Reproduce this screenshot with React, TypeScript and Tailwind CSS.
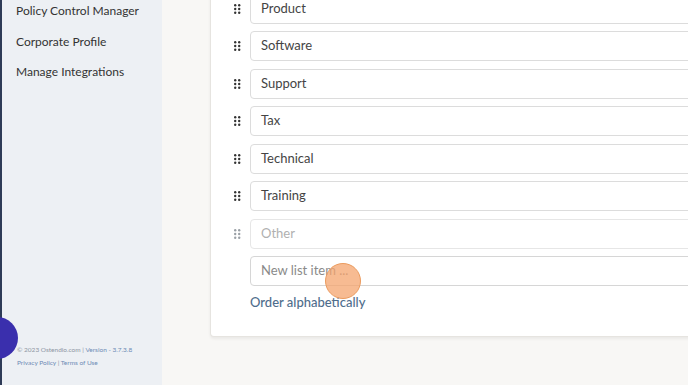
import React from 'react';

const items = ['Product', 'Software', 'Support', 'Tax', 'Technical', 'Training'];

function DragDots({ faded = false }: { faded?: boolean }) {
  return (
    <svg width="7" height="10" viewBox="0 0 7 10" className={faded ? 'text-[#9aa0a6]' : 'text-[#333]'}>
      {[1.2, 5.2].map((x) =>
        [1.2, 5, 8.8].map((y) => <circle key={`${x}-${y}`} cx={x} cy={y} r="1.2" fill="currentColor" />)
      )}
    </svg>
  );
}

export default function App() {
  return (
    <div className="flex h-[385px] w-[688px] overflow-hidden bg-[#f8f7f5] font-['Lato',sans-serif]">
      <aside className="relative flex w-[162px] shrink-0 flex-col justify-between border-l-2 border-[#2e3b57] bg-[#edf0f4]">
        <nav className="flex flex-col pl-[14px] text-[12px] text-[#333]">
          <div className="mt-[2px] h-[18px] leading-[18px]">Policy Control Manager</div>
          <div className="mt-[12.5px] h-[18px] leading-[18px]">Corporate Profile</div>
          <div className="mt-[12.5px] h-[18px] leading-[18px]">Manage Integrations</div>
        </nav>
        <div className="mb-[16px] pl-[15px] text-[6.5px] leading-[13px] text-[#8d96a3]">
          <div>
            © 2023 Ostendio.com | <span className="text-[#6d8bb4]">Version - 3.7.3.8</span>
          </div>
          <div className="text-[#6d8bb4]">
            Privacy Policy <span className="text-[#8d96a3]">|</span> Terms of Use
          </div>
        </div>
        <div className="absolute left-[-26px] top-[317px] h-[42px] w-[42px] rounded-full bg-[#3a2fad]" />
      </aside>

      <main className="relative flex-1 pl-[48px]">
        <div className="w-[560px] rounded-b-[4px] border border-t-0 border-[#e6e4e0] bg-white pb-[25px] pl-[23px] shadow-[0_2px_3px_rgba(0,0,0,0.06)]">
          <div className="-mt-[6.5px] flex flex-col gap-[7.5px]">
            {items.map((item) => (
              <div key={item} className="flex items-center">
                <div className="mr-[9px] flex w-[7px] justify-center">
                  <DragDots />
                </div>
                <div className="flex h-[30px] flex-1 items-center rounded-[4px] border border-[#dcdcdc] pl-[10px] text-[13px] text-[#444]">
                  {item}
                </div>
              </div>
            ))}
            <div className="flex items-center">
              <div className="mr-[9px] flex w-[7px] justify-center">
                <DragDots faded />
              </div>
              <div className="flex h-[30px] flex-1 items-center rounded-[4px] border border-[#e6e6e6] pl-[10px] text-[13px] text-[#b0b0b0]">
                Other
              </div>
            </div>
            <div className="flex items-center pl-[16px]">
              <div className="flex h-[30px] flex-1 items-center rounded-[4px] border border-[#d6d6d6] pl-[10px] text-[13px] text-[#8a8a8a]">
                New list item ...
              </div>
            </div>
          </div>
          <div className="mt-[7px] pl-[16px] text-[13px] font-medium leading-[18px] text-[#4f6d8c]">Order alphabetically</div>
        </div>
        <div className="absolute left-[163px] top-[263px] h-[36px] w-[36px] rounded-full border border-[#eb9b5e] bg-[#f4a46e]/75" />
      </main>
    </div>
  );
}
